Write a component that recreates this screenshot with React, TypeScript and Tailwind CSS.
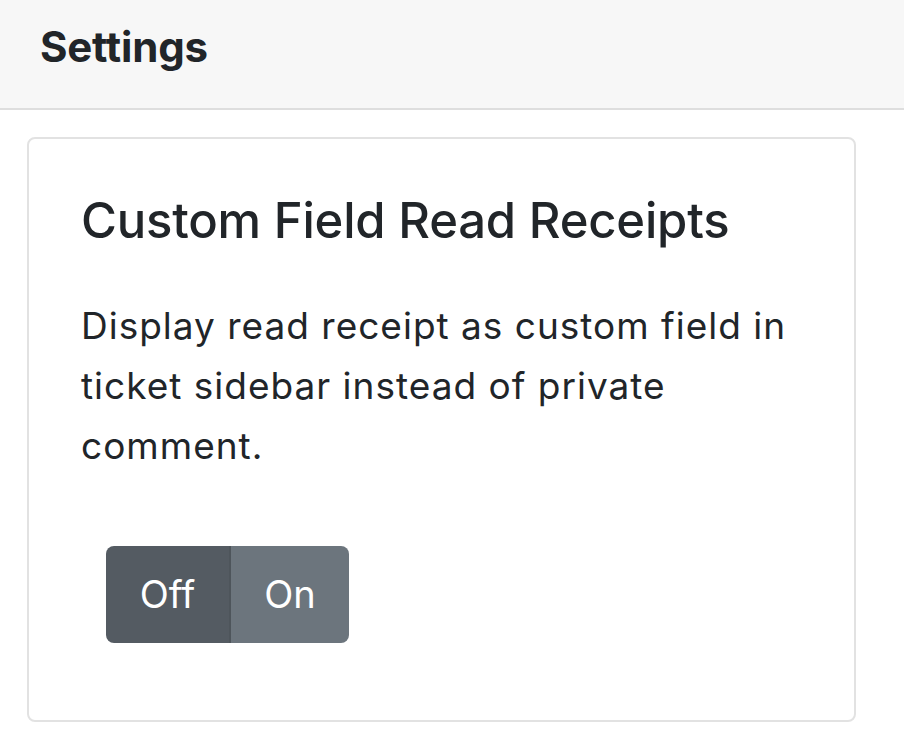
export default function App() {
  return (
    <div className="w-[904px] h-[744px] bg-white overflow-hidden" style={{ fontFamily: 'Inter, "Liberation Sans", sans-serif' }}>
      <div className="h-[110px] bg-[#f7f7f7] border-b-2 border-[#dedede] pt-[26px] pl-[40px]">
        <div className="text-[42px] font-bold text-[#212529] leading-none tracking-[-0.2px]">Settings</div>
      </div>
      <div className="ml-[27px] mt-[27px] w-[829px] h-[585px] border-2 border-[#e2e2e2] rounded-[8px] pt-[52px] pl-[52px] pr-[40px]">
        <h2 className="text-[49px] font-medium text-[#212529] leading-[60px] tracking-[-0.2px]">Custom Field Read Receipts</h2>
        <p className="mt-[45px] text-[37px] text-[#212529] leading-[60px] tracking-[1px] w-[730px]">
          Display read receipt as custom field in ticket sidebar instead of private comment.
        </p>
        <div className="mt-[70px] ml-[25px] flex w-[243px] h-[97px] rounded-[8px] overflow-hidden text-white text-[38px]">
          <div className="w-[125px] bg-[#545b62] border-r-2 border-[#4e555b] flex items-center justify-center">Off</div>
          <div className="flex-1 bg-[#6c757d] flex items-center justify-center">On</div>
        </div>
      </div>
    </div>
  );
}
